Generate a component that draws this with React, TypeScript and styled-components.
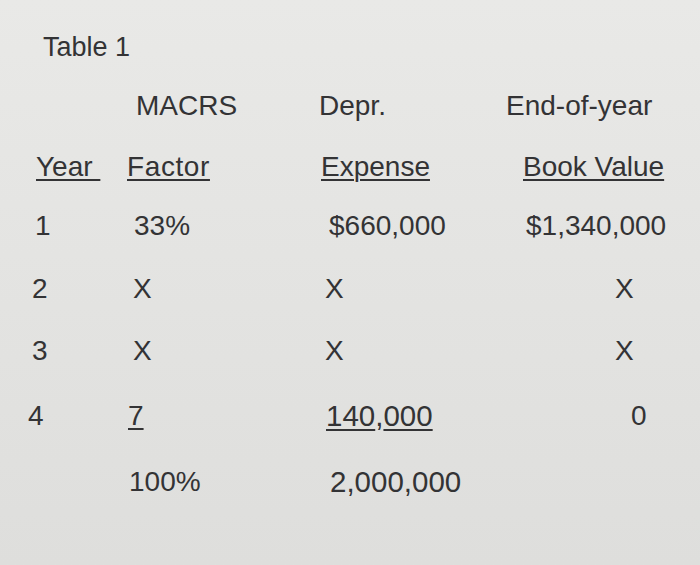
import React from 'react';
import styled, { createGlobalStyle } from 'styled-components';

const GlobalStyle = createGlobalStyle`
  html, body {
    margin: 0;
    padding: 0;
  }
  body {
    width: 700px;
    height: 565px;
    overflow: hidden;
    background: linear-gradient(180deg, #e9e9e7 0%, #e4e4e2 45%, #dededc 100%);
    font-family: "Liberation Sans", Arial, sans-serif;
    color: #333335;
  }
`;

const Sheet = styled.div`
  width: 700px;
  height: 565px;
  padding-top: 34px;
  box-sizing: border-box;
`;

const Title = styled.h1`
  margin: 0 0 31px 43px;
  font-size: 27px;
  font-weight: normal;
  line-height: 27px;
`;

const Grid = styled.div`
  display: grid;
  grid-template-columns: 126px 190px 184px 200px;
  grid-template-rows: 61px 59px 63px 62px 65px 66px 40px;
`;

const Cell = styled.div<{ $pad?: number; $spacing?: number; $size?: number }>`
  align-self: start;
  padding-left: ${(p) => p.$pad ?? 0}px;
  font-size: ${(p) => p.$size ?? 28}px;
  line-height: 28px;
  letter-spacing: ${(p) => p.$spacing ?? 0}px;
  white-space: nowrap;
`;

const U = styled.span`
  text-decoration: underline;
  text-decoration-thickness: 2px;
  text-underline-offset: 3px;
`;

const Blank = styled.div``;

const App: React.FC = () => {
  return (
    <>
      <GlobalStyle />
      <Sheet>
        <Title>Table 1</Title>
        <Grid>
          <Blank />
          <Cell $pad={10}>MACRS</Cell>
          <Cell $pad={3}>Depr.</Cell>
          <Cell $pad={6}>End-of-year</Cell>

          <Cell $pad={36}><U>Year&nbsp;</U></Cell>
          <Cell $pad={1} $spacing={0.6}><U>Factor</U></Cell>
          <Cell $pad={5}><U>Expense</U></Cell>
          <Cell $pad={23}><U>Book Value</U></Cell>

          <Cell $pad={35}>1</Cell>
          <Cell $pad={8}>33%</Cell>
          <Cell $pad={13}>$660,000</Cell>
          <Cell $pad={26}>$1,340,000</Cell>

          <Cell $pad={32}>2</Cell>
          <Cell $pad={7}>X</Cell>
          <Cell $pad={9}>X</Cell>
          <Cell $pad={115}>X</Cell>

          <Cell $pad={32}>3</Cell>
          <Cell $pad={7}>X</Cell>
          <Cell $pad={9}>X</Cell>
          <Cell $pad={115}>X</Cell>

          <Cell $pad={28}>4</Cell>
          <Cell $pad={2}><U>7</U></Cell>
          <Cell $pad={10} $size={29.5}><U>140</U>,<U>000</U></Cell>
          <Cell $pad={131}>0</Cell>

          <Blank />
          <Cell $pad={3}>100%</Cell>
          <Cell $pad={14} $size={29.5}>2,000,000</Cell>
          <Blank />
        </Grid>
      </Sheet>
    </>
  );
};

export default App;
